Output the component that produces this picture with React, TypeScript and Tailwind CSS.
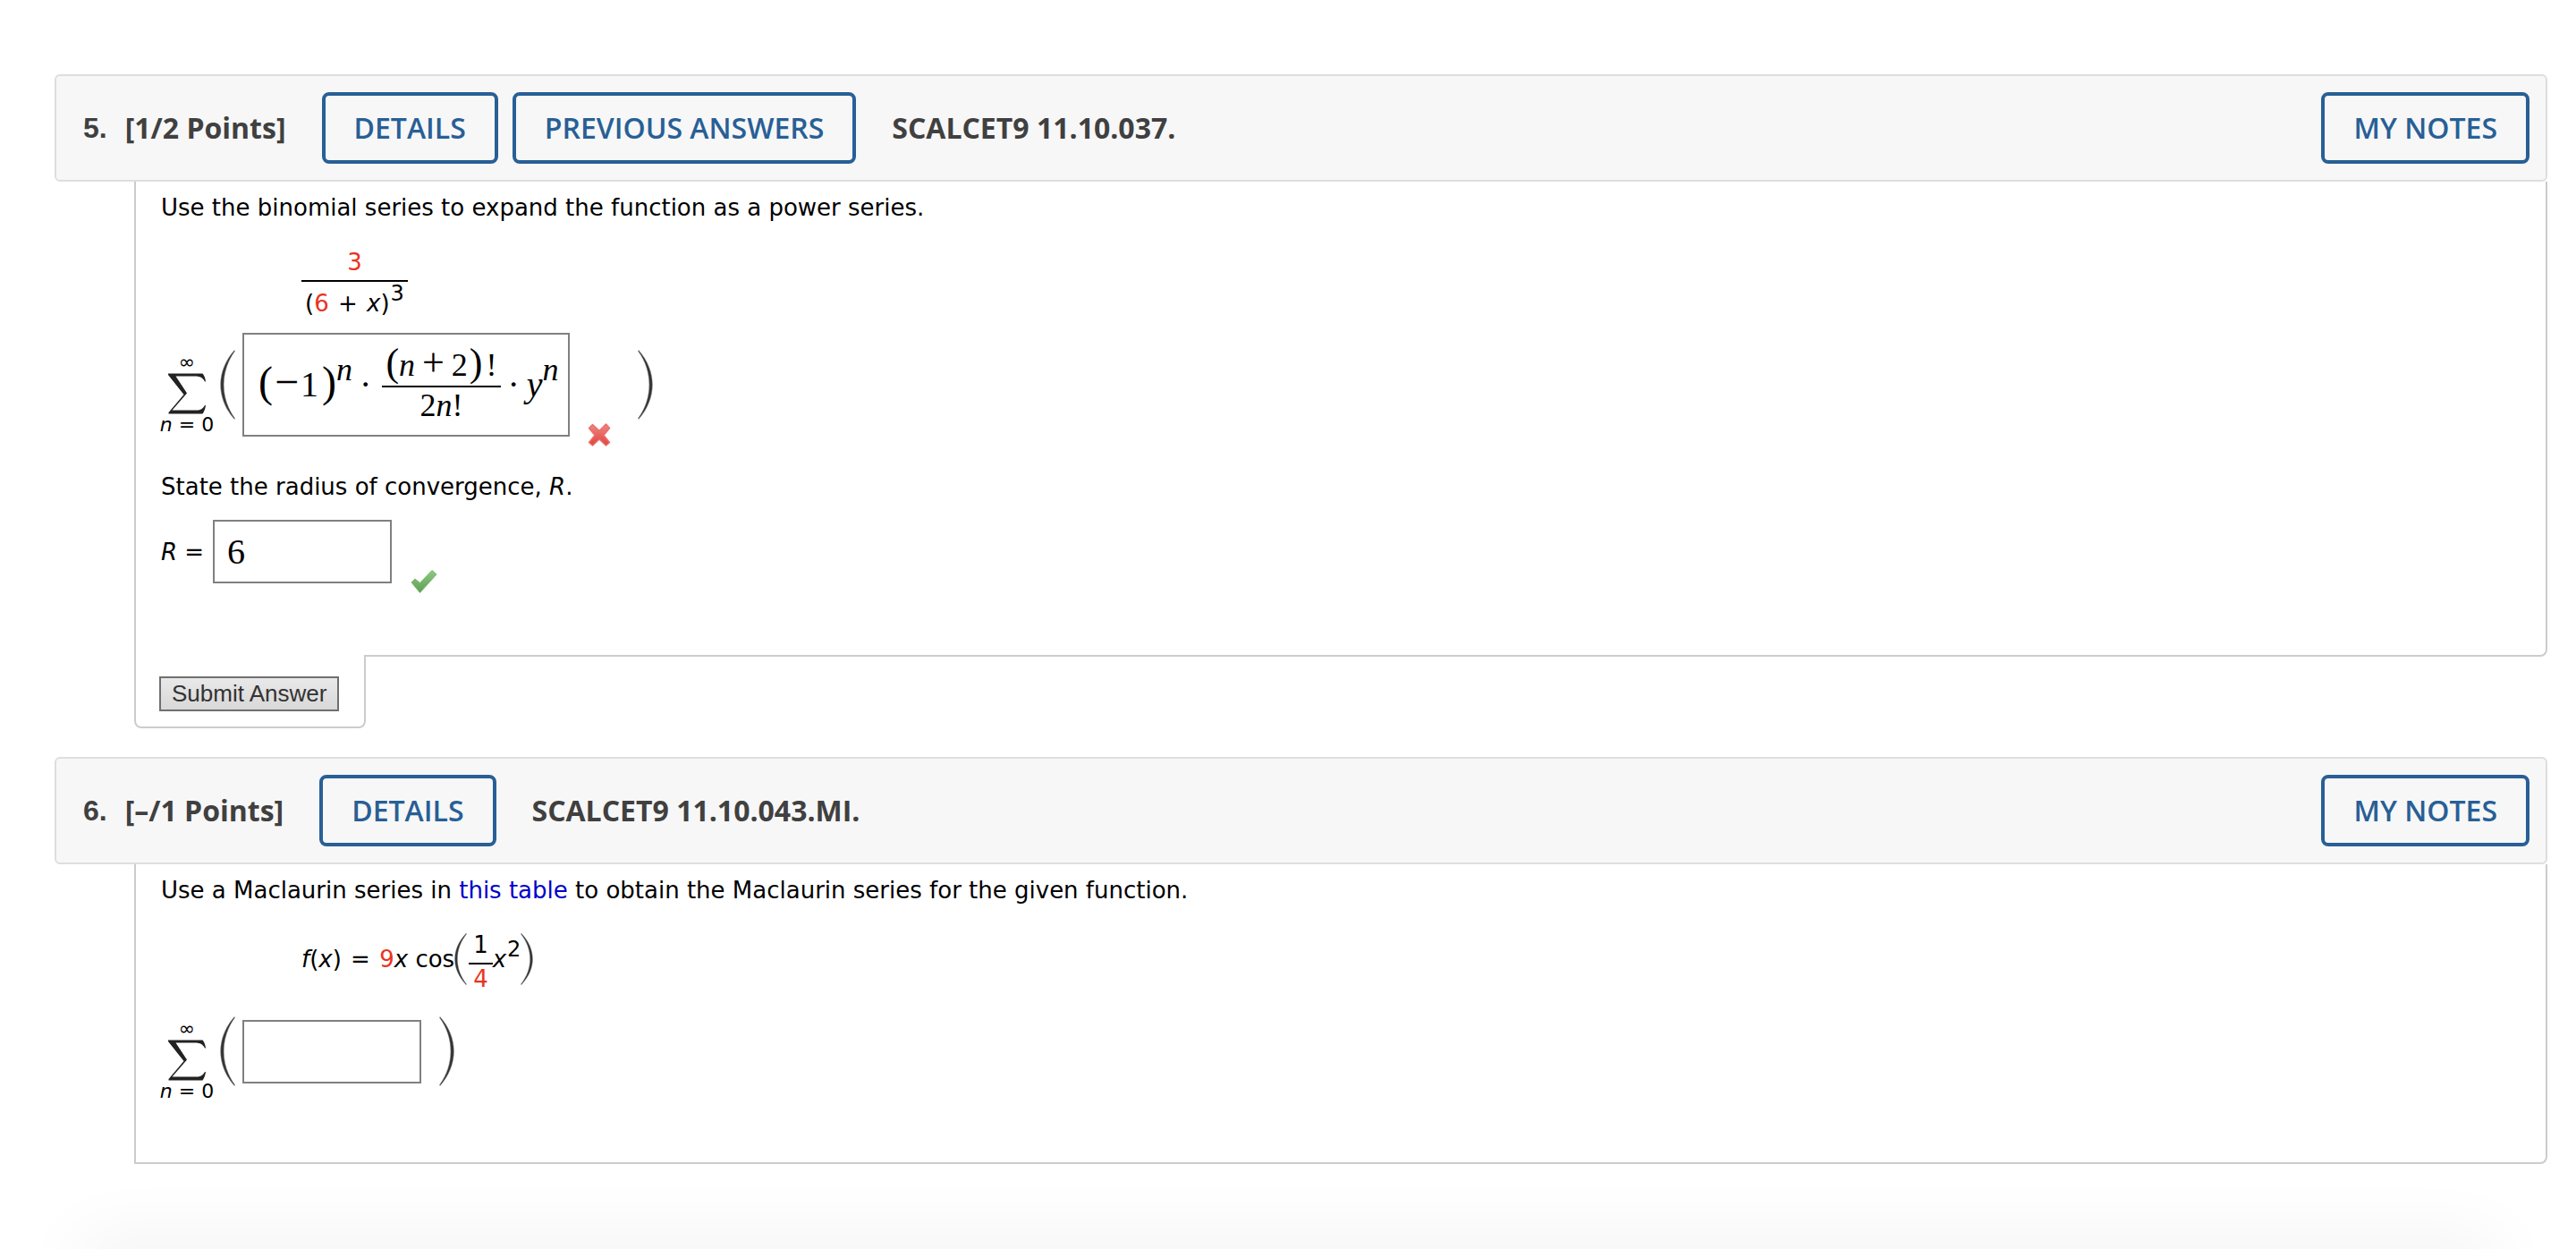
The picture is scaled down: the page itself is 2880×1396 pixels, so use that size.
import { useId, useState } from "react";
import type { ReactNode } from "react";

interface HeaderProps {
  number: number;
  points: string;
  actions: string[];
  code: string;
}

function OutlineButton({ children }: { children: ReactNode }) {
  return (
    <button
      type="button"
      className="h-20 rounded-lg border-4 border-[#285f96] px-8 font-semibold text-[#285f96]"
    >
      {children}
    </button>
  );
}

function QuestionHeader({ number, points, actions, code }: HeaderProps) {
  return (
    <header className="flex items-center rounded-md border-2 border-[#dedede] bg-[#f7f7f7] py-[18px] pr-[18px] pl-[30px] font-['Open_Sans',sans-serif] text-[32px] leading-10 text-[#404040]">
      <h2 className="flex gap-5 font-bold">
        <span className="font-['Liberation_Sans',sans-serif]">{number}.</span>
        <span>{points}</span>
      </h2>
      <div className="mx-10 flex gap-4">
        {actions.map((action) => (
          <OutlineButton key={action}>{action}</OutlineButton>
        ))}
      </div>
      <span className="mr-auto font-bold">{code}</span>
      <OutlineButton>MY NOTES</OutlineButton>
    </header>
  );
}

function Red({ children }: { children: ReactNode }) {
  return <span className="text-[#ea3323]">{children}</span>;
}

function LeftParen({ className }: { className: string }) {
  return (
    <svg viewBox="0 0 17 78" preserveAspectRatio="none" className={className} aria-hidden="true">
      <path d="M16 .5C-4.500 24-4.500 54 16 77.500L16.500 76.500C0 54 0 24 16.500 1.500Z" fill="#333" stroke="#888" strokeWidth=".5" />
    </svg>
  );
}

function RightParen({ className }: { className: string }) {
  return (
    <svg viewBox="0 0 17 78" preserveAspectRatio="none" className={className} aria-hidden="true">
      <path d="M1 .5C21.500 24 21.500 54 1 77.500L.5 76.500C17 54 17 24 .5 1.500Z" fill="#333" stroke="#888" strokeWidth=".5" />
    </svg>
  );
}

// Summation sign with its bounds, n = 0 to infinity
function SumSymbol() {
  return (
    <div className="flex w-[58px] shrink-0 flex-col items-center pt-5 text-[22px] leading-6">
      <span>∞</span>
      <svg viewBox="0 0 42 46" className="h-[46px] w-[42px]" aria-hidden="true">
        <path
          d="M0 .5H38.500C40 2 41.500 5 42 9.500H41C39 5.500 36 3.500 30 3.500H8.500L21 22.500L4.500 41.500H31C37 41.500 39 39.500 41 36H42C41.500 40 40 43.500 38.500 45.500H.5V44L17.500 24L0 2Z"
          fill="#222"
        />
      </svg>
      <span className="whitespace-nowrap">
        <i>n</i> = 0
      </span>
    </div>
  );
}

function Fraction({ top, bottom, className }: { top: ReactNode; bottom: ReactNode; className?: string }) {
  return (
    <span className={className}>
      <span className="block border-b-2 border-black pb-1 text-center">{top}</span>
      <span className="block text-center">{bottom}</span>
    </span>
  );
}

function WrongMark() {
  return (
    <svg viewBox="0 0 26 28" className="h-7 w-[26px]" role="img" aria-label="Incorrect">
      <defs>
        <linearGradient id="wrong-fill" x1="0" y1="0" x2="0" y2="1">
          <stop offset="0" stopColor="#f08783" />
          <stop offset="1" stopColor="#df443e" />
        </linearGradient>
      </defs>
      <path
        d="M5.500 2.500L13 9.500L20.500 2L24.500 6.500L18 14.500L24.500 22.500L20.500 26L13 19L5.500 26L1.500 22.500L8 14.500L1.500 6.500Z"
        fill="url(#wrong-fill)"
        stroke="#ea6f6a"
        strokeWidth="1.500"
        strokeLinejoin="round"
      />
    </svg>
  );
}

function CorrectMark() {
  return (
    <svg viewBox="0 0 32 28" className="h-7 w-8" role="img" aria-label="Correct">
      <defs>
        <linearGradient id="correct-fill" x1="0" y1="0" x2="0" y2="1">
          <stop offset="0" stopColor="#8fc983" />
          <stop offset="1" stopColor="#5d9f52" />
        </linearGradient>
      </defs>
      <path
        d="M2 15L6 11L11.500 15.500L25 1.500L30 6L11.500 26.500Z"
        fill="url(#correct-fill)"
        stroke="#7db671"
        strokeWidth="1"
        strokeLinejoin="round"
      />
    </svg>
  );
}

function AnswerField({ mark, children }: { mark?: ReactNode; children: ReactNode }) {
  return (
    <div className="flex items-end gap-5">
      {children}
      {mark && <span className="-mb-3">{mark}</span>}
    </div>
  );
}

const inputClass =
  "h-[71px] w-[200px] border-2 border-[#808080] bg-white px-[14px] font-['Liberation_Serif',serif] text-[40px] leading-10 outline-none";

function SeriesAnswer() {
  return (
    <div
      role="math"
      className="flex h-[116px] w-[366px] items-center border-2 border-[#808080] pl-4 font-['Liberation_Serif',serif] text-[40px] leading-10"
    >
      <span className="whitespace-nowrap">
        <span className="text-5xl leading-0">(</span>
        <span className="mx-0.5 text-5xl leading-0">−</span>1
        <span className="ml-1 text-5xl leading-0">)</span>
        <sup className="text-4xl leading-0">
          <i>n</i>
        </sup>
      </span>
      <span className="mr-3 ml-2">·</span>
      <span className="text-center text-4xl leading-10">
        <span className="block border-b-2 border-black px-1 pb-[3px] whitespace-nowrap">
          <span className="text-[44px] leading-0">(</span>
          <i>n</i>
          <span className="mx-2 text-[44px] leading-0">+</span>2
          <span className="ml-0.5 text-[44px] leading-0">)</span>
          <span className="ml-1">!</span>
        </span>
        <span className="block">
          2<i>n</i>!
        </span>
      </span>
      <span className="mx-2">·</span>
      <span className="whitespace-nowrap">
        <i>y</i>
        <sup className="text-4xl leading-0">
          <i>n</i>
        </sup>
      </span>
    </div>
  );
}

const bodyClass = "rounded-br-lg border-r-2 border-b-2 border-l-2 border-[#ccc] px-7 pt-[13px]";

export default function App() {
  const radiusId = useId();
  const [radius, setRadius] = useState("6");
  const [term, setTerm] = useState("");

  return (
    <main className="relative min-h-screen overflow-hidden bg-white pt-[83px] pr-8 pb-20 pl-[61px] font-['DejaVu_Sans',sans-serif] text-[26px] leading-8 text-black">
      <section className="mb-8">
        <QuestionHeader
          number={5}
          points="[1/2 Points]"
          actions={["DETAILS", "PREVIOUS ANSWERS"]}
          code="SCALCET9 11.10.037."
        />
        <div className="ml-[89px]">
          <div className={`${bodyClass} pb-20`}>
            <p>Use the binomial series to expand the function as a power series.</p>
            <div className="mt-[29px] ml-[157px] flex">
              <Fraction
                top={<Red>3</Red>}
                bottom={
                  <span className="block px-1 pt-2">
                    (<Red>6</Red>
                    <span className="mx-0.5"> + </span>
                    <i>x</i>)<sup className="ml-px text-2xl leading-0">3</sup>
                  </span>
                }
              />
            </div>
            <div className="mt-[17px] flex items-center gap-2">
              <SumSymbol />
              <LeftParen className="h-[78px] w-[17px]" />
              <AnswerField mark={<WrongMark />}>
                <SeriesAnswer />
              </AnswerField>
              <RightParen className="ml-[22px] h-[78px] w-[17px]" />
            </div>
            <p className="mt-10">
              State the radius of convergence, <i>R</i>.
            </p>
            <div className="mt-[21px] flex items-center">
              <label htmlFor={radiusId} className="w-[58px]">
                <i>R</i> =
              </label>
              <AnswerField mark={<CorrectMark />}>
                <input
                  id={radiusId}
                  type="text"
                  className={inputClass}
                  value={radius}
                  onChange={(e) => setRadius(e.target.value)}
                />
              </AnswerField>
            </div>
          </div>
          {/* Tab hangs under the body and hides its bottom border */}
          <div className="relative -mt-0.5 w-fit rounded-b-lg border-r-2 border-b-2 border-l-2 border-[#ccc] bg-white pt-6 pr-7 pb-[17px] pl-[26px]">
            <button
              type="button"
              className="block border-2 border-[#6f6f6f] bg-linear-to-b from-[#e9e9e9] to-[#d8d8d8] px-3 py-px font-['Liberation_Sans',sans-serif] leading-[33px] text-[#333]"
            >
              Submit Answer
            </button>
          </div>
        </div>
      </section>

      <section>
        <QuestionHeader number={6} points="[–/1 Points]" actions={["DETAILS"]} code="SCALCET9 11.10.043.MI." />
        <div className={`${bodyClass} ml-[89px] pb-[67px]`}>
          <p>
            Use a Maclaurin series in{" "}
            <a href="#table" className="text-[#0000cc]">
              this table
            </a>{" "}
            to obtain the Maclaurin series for the given function.
          </p>
          <div className="mt-[23px] ml-[157px] flex items-center">
            <span>
              <i>f</i>(<i>x</i>)<span className="mx-0.5"> = </span>
              <Red>9</Red>
              <i>x</i> cos
            </span>
            <LeftParen className="mr-0.5 h-[58px] w-[14px]" />
            <Fraction
              className="pt-1.5"
              top={<span className="px-[5px]">1</span>}
              bottom={<Red>4</Red>}
            />
            <span>
              <i>x</i>
              <sup className="ml-px text-2xl leading-0">2</sup>
            </span>
            <RightParen className="h-[58px] w-[14px]" />
          </div>
          <div className="mt-2 flex items-center gap-2">
            <SumSymbol />
            <LeftParen className="h-[78px] w-[17px]" />
            <AnswerField>
              <input
                type="text"
                aria-label="Series term"
                className={inputClass}
                value={term}
                onChange={(e) => setTerm(e.target.value)}
              />
            </AnswerField>
            <RightParen className="ml-3 h-[78px] w-[17px]" />
          </div>
        </div>
      </section>

      {/* Shadow of the next card, just below the fold */}
      <div className="absolute inset-x-[100px] top-full h-10 shadow-[0_0_80px_10px_rgba(0,0,0,0.06)]" />
    </main>
  );
}
